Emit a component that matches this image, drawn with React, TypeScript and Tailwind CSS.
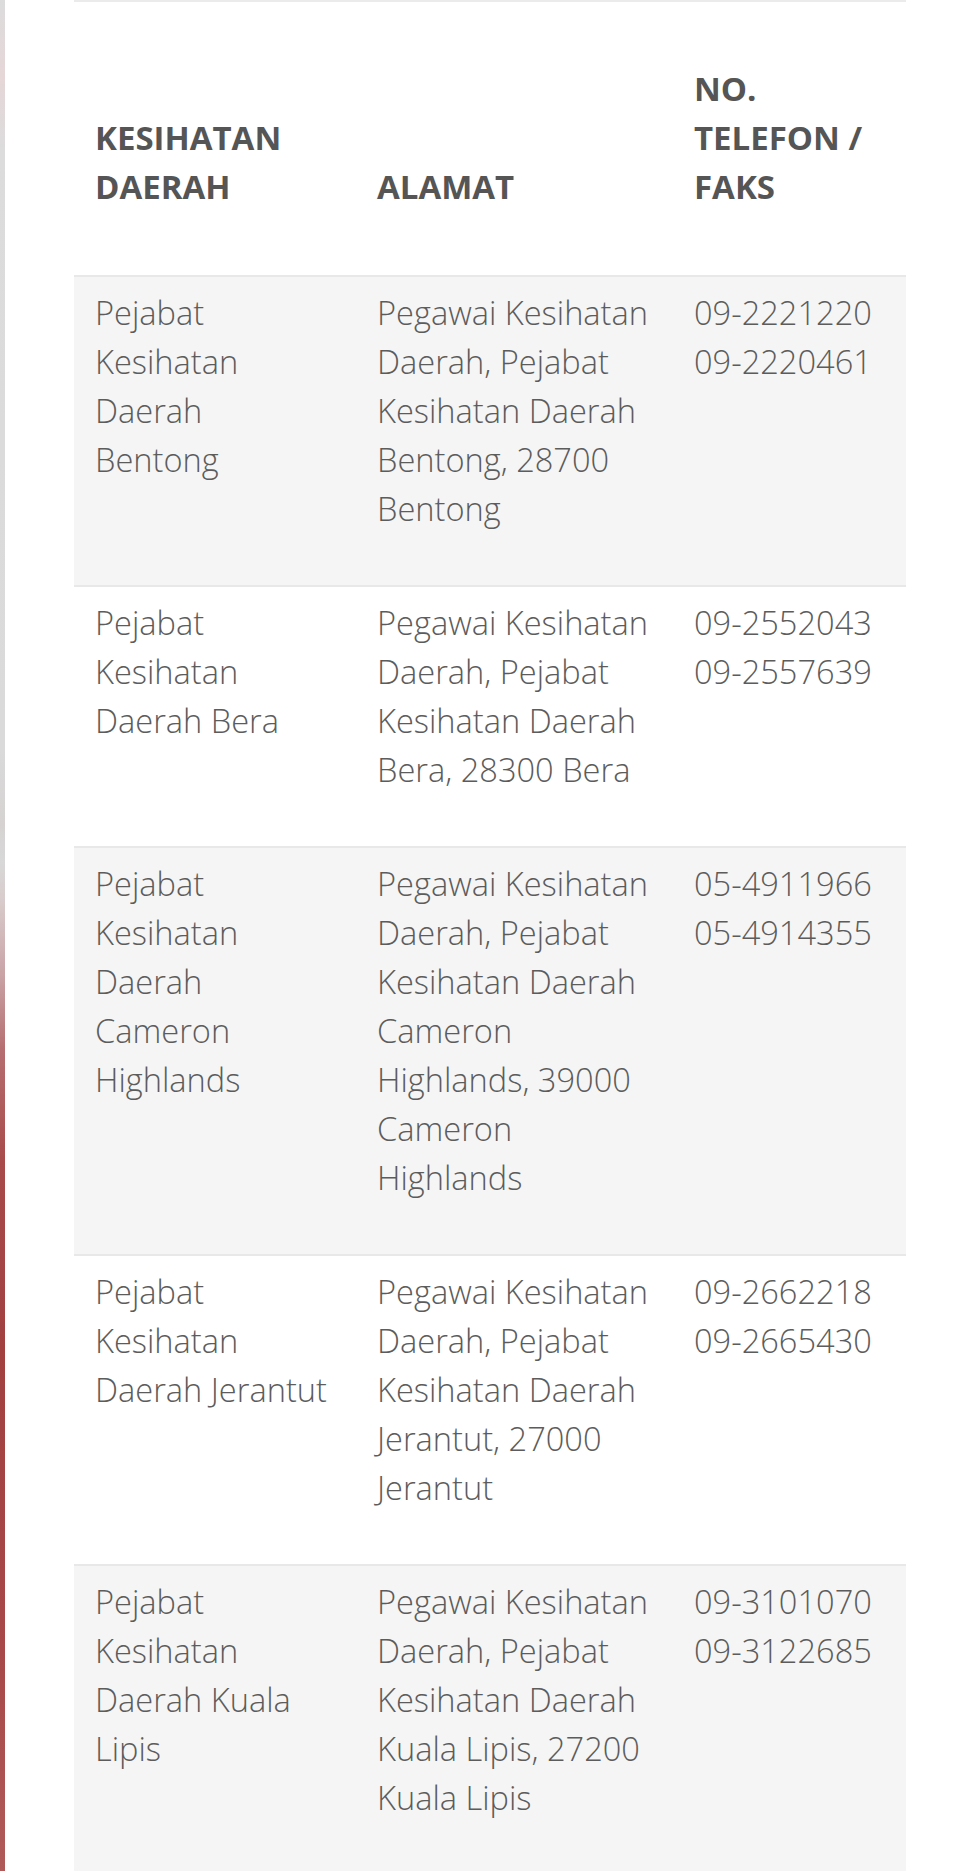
import React from 'react';

type Row = {
  name: string[];
  address: string[];
  phones: string[];
};

const rows: Row[] = [
  {
    name: ['Pejabat', 'Kesihatan', 'Daerah', 'Bentong'],
    address: ['Pegawai Kesihatan', 'Daerah, Pejabat', 'Kesihatan Daerah', 'Bentong, 28700', 'Bentong'],
    phones: ['09-2221220', '09-2220461'],
  },
  {
    name: ['Pejabat', 'Kesihatan', 'Daerah Bera'],
    address: ['Pegawai Kesihatan', 'Daerah, Pejabat', 'Kesihatan Daerah', 'Bera, 28300 Bera'],
    phones: ['09-2552043', '09-2557639'],
  },
  {
    name: ['Pejabat', 'Kesihatan', 'Daerah', 'Cameron', 'Highlands'],
    address: [
      'Pegawai Kesihatan',
      'Daerah, Pejabat',
      'Kesihatan Daerah',
      'Cameron',
      'Highlands, 39000',
      'Cameron',
      'Highlands',
    ],
    phones: ['05-4911966', '05-4914355'],
  },
  {
    name: ['Pejabat', 'Kesihatan', 'Daerah Jerantut'],
    address: ['Pegawai Kesihatan', 'Daerah, Pejabat', 'Kesihatan Daerah', 'Jerantut, 27000', 'Jerantut'],
    phones: ['09-2662218', '09-2665430'],
  },
  {
    name: ['Pejabat', 'Kesihatan', 'Daerah Kuala', 'Lipis'],
    address: ['Pegawai Kesihatan', 'Daerah, Pejabat', 'Kesihatan Daerah', 'Kuala Lipis, 27200', 'Kuala Lipis'],
    phones: ['09-3101070', '09-3122685'],
  },
];

const Lines: React.FC<{ lines: string[] }> = ({ lines }) => (
  <>
    {lines.map((l, i) => (
      <span key={i} className="block whitespace-nowrap">
        {l}
      </span>
    ))}
  </>
);

export default function App() {
  return (
    <div className="flex min-h-[1871px] bg-white text-[#5c5c5c] font-['Open_Sans',sans-serif]">
      <div className="w-[5px] shrink-0 self-stretch bg-[linear-gradient(to_bottom,#dcdcdc_0%,#e6d6d8_4%,#dcdcdc_8%,#dadada_40%,#d6d2d2_44%,#d8d8d8_46%,#d9cccc_48%,#c9a3a6_52%,#b66e70_56%,#a84a4a_62%,#a24040_72%,#a84848_88%,#b05a5a_100%)]" />
      <div className="pl-[69px] pr-[69px] flex-1">
        <table className="w-[832px] table-fixed border-collapse border-t-2 border-[#ebebeb]">
          <colgroup>
            <col className="w-[283px]" />
            <col className="w-[317px]" />
            <col className="w-[232px]" />
          </colgroup>
          <thead>
            <tr className="text-left align-bottom text-[33px] leading-[49px] font-bold text-[#555]">
              <th className="pl-[21px] pr-[20px] pt-[62px] pb-[64px]">
                <Lines lines={['KESIHATAN', 'DAERAH']} />
              </th>
              <th className="pl-[20px] pr-[20px] pt-[62px] pb-[64px]">
                <Lines lines={['ALAMAT']} />
              </th>
              <th className="pl-[20px] pr-[20px] pt-[62px] pb-[64px]">
                <Lines lines={['NO.', 'TELEFON /', 'FAKS']} />
              </th>
            </tr>
          </thead>
          <tbody>
            {rows.map((r, i) => (
              <tr
                key={i}
                className={
                  'align-top border-t-2 border-[#e8e8e8] text-[32.6px] leading-[49px] font-light ' +
                  (i % 2 === 0 ? 'bg-[#f5f5f5]' : 'bg-white')
                }
              >
                <td className="pl-[21px] pr-[20px] pt-[11px] pb-[52px]">
                  <Lines lines={r.name} />
                </td>
                <td className="pl-[20px] pr-[20px] pt-[11px] pb-[52px]">
                  <Lines lines={r.address} />
                </td>
                <td className="pl-[20px] pr-[20px] pt-[11px] pb-[52px]">
                  <Lines lines={r.phones} />
                </td>
              </tr>
            ))}
          </tbody>
        </table>
      </div>
    </div>
  );
}
